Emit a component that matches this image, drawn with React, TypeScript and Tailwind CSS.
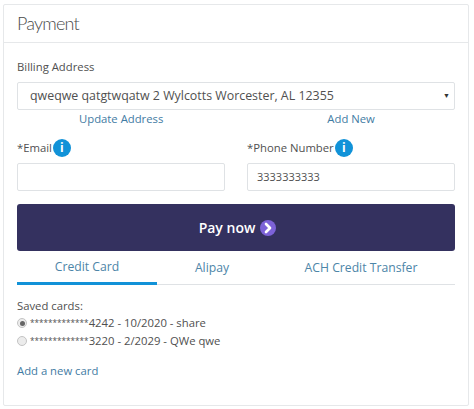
import { ChevronRight } from "lucide-react";

function InfoIcon() {
  return (
    <span className="flex h-[18px] w-[18px] shrink-0 items-center justify-center rounded-full bg-[#1192d8] text-[12px] font-bold leading-none text-white">
      i
    </span>
  );
}

function SavedCard({ stars, label, checked }: { stars: string; label: string; checked?: boolean }) {
  return (
    <div className="flex h-[18px] items-center">
      <span className="mr-[3px] flex h-[10px] w-[10px] items-center justify-center rounded-full border border-[#c4c4c4] bg-[#ececec]">
        {checked && <span className="h-[5px] w-[5px] rounded-full bg-[#666]" />}
      </span>
      <span className="text-[8.2px]">{stars}</span>
      <span>{label}</span>
    </div>
  );
}

export default function App() {
  return (
    <div className="h-[409px] w-[474px] bg-white pl-[3px] pt-[4px] font-['Open_Sans',sans-serif] text-[11.3px] text-[#505050]">
      <div className="flex h-[402px] w-[466px] flex-col rounded-[2px] border border-[#e6e8ea] bg-white">
        <div className="flex h-[38px] shrink-0 items-center border-b border-[#e6e8ea] px-[13px] font-['Lato',sans-serif] text-[18px] font-light tracking-[-0.8px] text-[#4a4a4a]">
          Payment
        </div>
        <div className="flex flex-col px-[13px]">
          <div className="mt-[15px] leading-[17px]">Billing Address</div>
          <div className="mt-[7px] flex h-[28px] items-center justify-between rounded-[2px] border border-[#dfe2e5] pl-[12px] pr-[4px] text-[12.4px]">
            <span>qweqwe qatgtwqatw 2 Wylcotts Worcester, AL 12355</span>
            <span className="text-[7px] text-[#333]">▼</span>
          </div>
          <div className="flex h-[19px] items-center text-[#3f7ba3]">
            <span className="ml-[62px]">Update Address</span>
            <span className="ml-[164px]">Add New</span>
          </div>
          <div className="mt-[10px] grid grid-cols-[208px_208px] gap-x-[22px]">
            <div className="flex flex-col">
              <div className="flex h-[18px] items-center gap-[1px]">
                <span className="pt-[1px]">*Email</span> <InfoIcon />
              </div>
              <div className="mt-[6px] h-[28px] rounded-[2px] border border-[#dfe2e5]" />
            </div>
            <div className="flex flex-col">
              <div className="flex h-[18px] items-center gap-[1px]">
                <span className="pt-[1px]">*Phone Number</span> <InfoIcon />
              </div>
              <div className="mt-[6px] flex h-[28px] items-center rounded-[2px] border border-[#dfe2e5] px-[9px] text-[11px]">
                3333333333
              </div>
            </div>
          </div>
          <button className="mt-[13px] flex h-[47px] items-center justify-center gap-[5px] rounded-[3px] bg-[#34315f] pl-[3px] text-[14px] font-semibold text-white">
            Pay now
            <span className="flex h-[16px] w-[16px] items-center justify-center rounded-full bg-[#7c62d8]">
              <ChevronRight size={16} strokeWidth={4} className="text-white" />
            </span>
          </button>
          <div className="flex h-[34px] border-b border-[#dfe2e5] text-[12.2px] text-[#4d85a8]">
            <div className="-mb-px flex w-[140px] items-center justify-center border-b-[3px] border-[#1192d8] pt-[1px]">
              Credit Card
            </div>
            <div className="flex w-[110px] items-center justify-center pt-[1px]">Alipay</div>
            <div className="flex flex-1 items-center justify-center pt-[1px]">ACH Credit Transfer</div>
          </div>
          <div className="mt-[12px] leading-[17px]">Saved cards:</div>
          <SavedCard checked stars="*************" label="4242 - 10/2020 - share" />
          <SavedCard stars="*************" label="3220 - 2/2029 - QWe qwe" />
          <div className="mt-[12px] leading-[17px] text-[#3f7ba3]">Add a new card</div>
        </div>
      </div>
    </div>
  );
}
